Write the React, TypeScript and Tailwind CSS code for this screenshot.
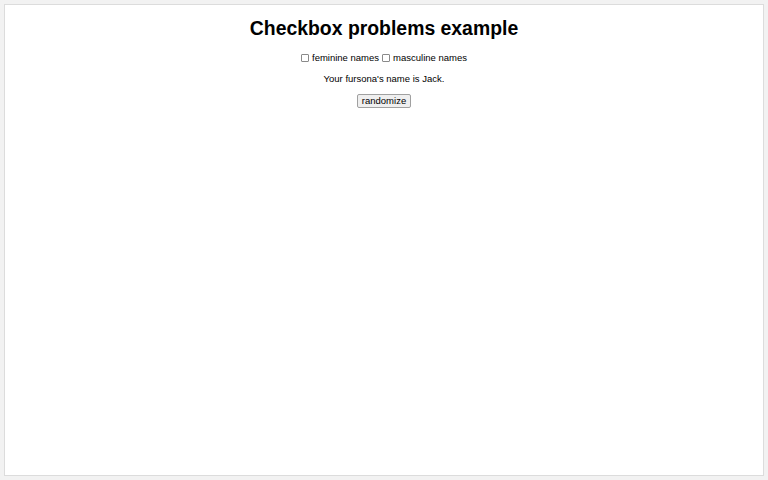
import { useState } from 'react'

const NAMES = {
  feminine: ['Luna', 'Maya', 'Ruby'],
  masculine: ['Jack', 'Felix', 'Oscar'],
}

export default function App() {
  const [fem, setFem] = useState(false)
  const [masc, setMasc] = useState(false)
  const [name, setName] = useState('Jack')

  const randomize = () => {
    let pool: string[] = []
    if (fem) pool = pool.concat(NAMES.feminine)
    if (masc) pool = pool.concat(NAMES.masculine)
    if (!pool.length) pool = [...NAMES.feminine, ...NAMES.masculine]
    setName(pool[Math.floor(Math.random() * pool.length)])
  }

  return (
    <div className="h-[480px] w-[768px] bg-[#f2f2f2] p-[4px] font-['Liberation_Sans',Arial,sans-serif] text-black">
      <div className="flex h-full flex-col items-center border border-[#dcdcdc] bg-white">
        <h1 className="mt-[11px] text-[19.4px] font-bold leading-[24px]">Checkbox problems example</h1>
        <div className="mt-[12px] flex items-center text-[9.5px] leading-[12px]">
          <input
            type="checkbox"
            checked={fem}
            onChange={(e) => setFem(e.target.checked)}
            className="mr-[3px] h-[8px] w-[8px] appearance-none rounded-[1px] border border-[#8a8a8a] bg-white"
          />
          <span>feminine names</span>
          <input
            type="checkbox"
            checked={masc}
            onChange={(e) => setMasc(e.target.checked)}
            className="ml-[3px] mr-[3px] h-[8px] w-[8px] appearance-none rounded-[1px] border border-[#8a8a8a] bg-white"
          />
          <span>masculine names</span>
        </div>
        <p className="mt-[9px] text-[9.5px] leading-[12px]">Your fursona's name is {name}.</p>
        <button
          onClick={randomize}
          className="mt-[9px] h-[14px] rounded-[2px] border border-[#a0a0a0] bg-[#efefef] px-[4px] text-[9.5px] leading-[12px]"
        >
          randomize
        </button>
      </div>
    </div>
  )
}
